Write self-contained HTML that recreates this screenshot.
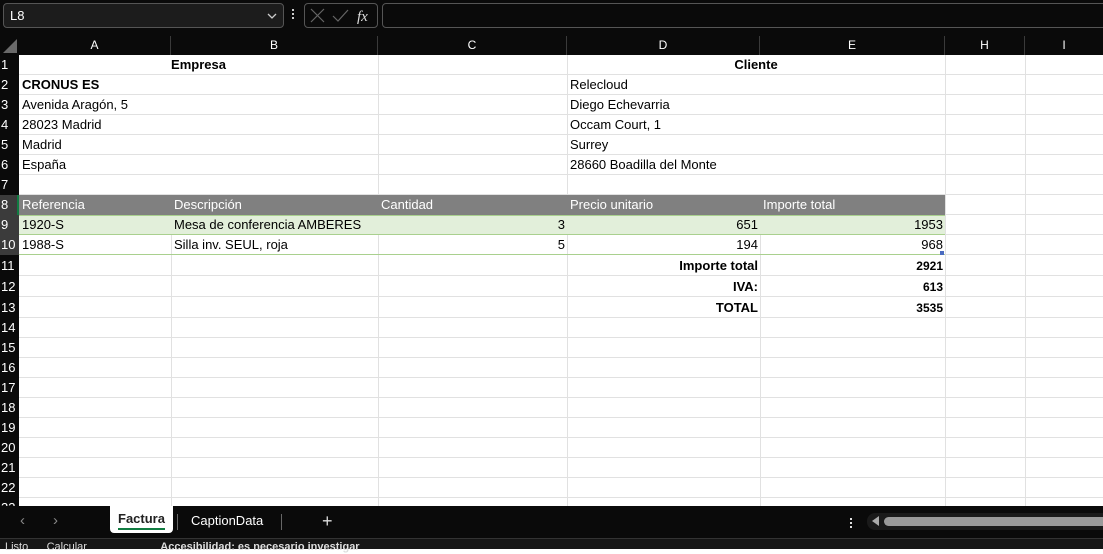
<!DOCTYPE html>
<html><head><meta charset="utf-8"><style>
*{margin:0;padding:0;box-sizing:border-box}
body{width:1103px;height:549px;overflow:hidden;background:#fff;font-family:"Liberation Sans",sans-serif;position:relative}
.a{position:absolute}
.h{position:absolute;left:19px;width:1084px;height:1px;background:#e1e1e1}
.v{position:absolute;top:55px;height:451px;width:1px;background:#e1e1e1}
.t{position:absolute;font-size:13px;color:#000;white-space:nowrap;line-height:20px}
.rn{position:absolute;left:0;width:19px;background:#0a0a0a;color:#fff;font-size:13px;text-align:left;padding-left:1px;line-height:20px}
.ch{position:absolute;top:36px;height:19px;color:#fff;font-size:12px;text-align:center;line-height:19px;border-right:1px solid #3a3a3a}
.r{text-align:right}
.b{font-weight:bold}
</style></head><body>
<div class="a" style="left:0;top:0;width:1103px;height:36px;background:#0a0a0a"></div>
<div class="a" style="left:3px;top:3px;width:281px;height:25px;border:1px solid #555;border-radius:4px;background:#1c1c1c;color:#fff;font-size:13px;line-height:23px;padding-left:6px">L8</div>
<svg class="a" style="left:266px;top:11px" width="12" height="10"><path d="M2 3l4 4 4-4" stroke="#ccc" fill="none" stroke-width="1.3"/></svg>
<div class="a" style="left:292px;top:9px;width:2px;height:2px;background:#ccc;box-shadow:0 4px #ccc,0 8px #ccc"></div>
<div class="a" style="left:304px;top:3px;width:74px;height:25px;border:1px solid #555;border-radius:4px"></div>
<svg class="a" style="left:308px;top:6px" width="70" height="20"><path d="M3 3l13 13M16 3L3 16" stroke="#666" stroke-width="1.2"/><path d="M25 10l5 5 10-11" stroke="#666" fill="none" stroke-width="1.2"/><text x="49" y="15" fill="#ddd" font-family="Liberation Serif" font-style="italic" font-size="15">fx</text></svg>
<div class="a" style="left:382px;top:3px;width:730px;height:25px;border:1px solid #555;border-radius:4px"></div>
<div class="a" style="left:0;top:36px;width:1103px;height:19px;background:#0a0a0a"></div>
<svg class="a" style="left:3px;top:39px" width="14" height="14"><path d="M14 0V14H0Z" fill="#6a6a6a"/></svg>
<div class="ch" style="left:19px;width:152px">A</div>
<div class="ch" style="left:171px;width:207px">B</div>
<div class="ch" style="left:378px;width:189px">C</div>
<div class="ch" style="left:567px;width:193px">D</div>
<div class="ch" style="left:760px;width:185px">E</div>
<div class="ch" style="left:945px;width:80px">H</div>
<div class="ch" style="left:1025px;width:78px;border:0">I</div>
<div class="a" style="left:0;top:55px;width:19px;height:451px;background:#0a0a0a"></div>
<div class="rn" style="top:55px">1</div><div class="rn" style="top:75px">2</div><div class="rn" style="top:95px">3</div><div class="rn" style="top:115px">4</div><div class="rn" style="top:135px">5</div><div class="rn" style="top:155px">6</div><div class="rn" style="top:175px">7</div>
<div class="rn" style="top:195px;background:#3b3b3b;border-right:2px solid #107c41">8</div>
<div class="rn" style="top:215px;background:#3b3b3b">9</div>
<div class="rn" style="top:235px;background:#3b3b3b">10</div>
<div class="rn" style="top:256px">11</div><div class="rn" style="top:277px">12</div><div class="rn" style="top:298px">13</div><div class="rn" style="top:318px">14</div><div class="rn" style="top:338px">15</div><div class="rn" style="top:358px">16</div><div class="rn" style="top:378px">17</div><div class="rn" style="top:398px">18</div><div class="rn" style="top:418px">19</div><div class="rn" style="top:438px">20</div><div class="rn" style="top:458px">21</div><div class="rn" style="top:478px">22</div><div class="rn" style="top:498px">23</div>
<div class="v" style="left:171px;top:195px;height:311px"></div><div class="v" style="left:378px"></div><div class="v" style="left:567px"></div><div class="v" style="left:760px;top:195px;height:311px"></div><div class="v" style="left:945px"></div><div class="v" style="left:1025px"></div>
<div class="h" style="top:74px"></div><div class="h" style="top:94px"></div><div class="h" style="top:114px"></div><div class="h" style="top:134px"></div><div class="h" style="top:154px"></div><div class="h" style="top:174px"></div><div class="h" style="top:194px"></div><div class="h" style="top:214px"></div><div class="h" style="top:234px"></div><div class="h" style="top:254px"></div><div class="h" style="top:275px"></div><div class="h" style="top:296px"></div><div class="h" style="top:317px"></div><div class="h" style="top:337px"></div><div class="h" style="top:357px"></div><div class="h" style="top:377px"></div><div class="h" style="top:397px"></div><div class="h" style="top:417px"></div><div class="h" style="top:437px"></div><div class="h" style="top:457px"></div><div class="h" style="top:477px"></div><div class="h" style="top:497px"></div>
<div class="a" style="left:19px;top:195px;width:926px;height:20px;background:#808080"></div>
<div class="a" style="left:19px;top:215px;width:926px;height:20px;background:#e2efda;border-top:1px solid #a9d08e;border-bottom:1px solid #a9d08e"></div>
<div class="a" style="left:19px;top:254px;width:926px;height:1px;background:#a9d08e"></div>
<div class="a" style="left:940px;top:251px;width:4px;height:4px;background:#4a6bc0"></div>
<div class="t b" style="left:19px;top:55px;width:359px;text-align:center">Empresa</div>
<div class="t b" style="left:567px;top:55px;width:378px;text-align:center">Cliente</div>
<div class="t b" style="left:22px;top:75px">CRONUS ES</div>
<div class="t" style="left:22px;top:95px">Avenida Aragón, 5</div>
<div class="t" style="left:22px;top:115px">28023 Madrid</div>
<div class="t" style="left:22px;top:135px">Madrid</div>
<div class="t" style="left:22px;top:155px">España</div>
<div class="t" style="left:570px;top:75px">Relecloud</div>
<div class="t" style="left:570px;top:95px">Diego Echevarria</div>
<div class="t" style="left:570px;top:115px">Occam Court, 1</div>
<div class="t" style="left:570px;top:135px">Surrey</div>
<div class="t" style="left:570px;top:155px">28660 Boadilla del Monte</div>
<div class="t" style="left:22px;top:195px;color:#fff">Referencia</div>
<div class="t" style="left:174px;top:195px;color:#fff">Descripción</div>
<div class="t" style="left:381px;top:195px;color:#fff">Cantidad</div>
<div class="t" style="left:570px;top:195px;color:#fff">Precio unitario</div>
<div class="t" style="left:763px;top:195px;color:#fff">Importe total</div>
<div class="t" style="left:22px;top:215px">1920-S</div>
<div class="t" style="left:174px;top:215px">Mesa de conferencia AMBERES</div>
<div class="t r" style="left:378px;top:215px;width:187px">3</div>
<div class="t r" style="left:567px;top:215px;width:191px">651</div>
<div class="t r" style="left:760px;top:215px;width:183px">1953</div>
<div class="t" style="left:22px;top:235px">1988-S</div>
<div class="t" style="left:174px;top:235px">Silla inv. SEUL, roja</div>
<div class="t r" style="left:378px;top:235px;width:187px">5</div>
<div class="t r" style="left:567px;top:235px;width:191px">194</div>
<div class="t r" style="left:760px;top:235px;width:183px">968</div>
<div class="t r b" style="left:567px;top:256px;width:191px">Importe total</div>
<div class="t r b" style="left:760px;top:256px;width:183px;font-size:12px">2921</div>
<div class="t r b" style="left:567px;top:277px;width:191px">IVA:</div>
<div class="t r b" style="left:760px;top:277px;width:183px;font-size:12px">613</div>
<div class="t r b" style="left:567px;top:298px;width:191px">TOTAL</div>
<div class="t r b" style="left:760px;top:298px;width:183px;font-size:12px">3535</div>
<div class="a" style="left:0;top:506px;width:1103px;height:32px;background:#0a0a0a"></div>
<div class="a" style="left:20px;top:512px;color:#888;font-size:15px">‹</div>
<div class="a" style="left:53px;top:512px;color:#888;font-size:15px">›</div>
<div class="a" style="left:110px;top:506px;width:63px;height:27px;background:#fff;border-radius:0 0 4px 4px;font-size:13px;font-weight:bold;color:#222;text-align:center;line-height:26px">Factura</div>
<div class="a" style="left:118px;top:528px;width:47px;height:2px;background:#107c41"></div>
<div class="a" style="left:177px;top:514px;width:1px;height:16px;background:#666"></div>
<div class="a" style="left:191px;top:506px;color:#fff;font-size:13px;line-height:30px">CaptionData</div>
<div class="a" style="left:281px;top:514px;width:1px;height:16px;background:#666"></div>
<div class="a" style="left:322px;top:506px;color:#ddd;font-size:18px;line-height:30px">+</div>
<div class="a" style="left:850px;top:518px;width:2px;height:2px;background:#ddd;box-shadow:0 4px #ddd,0 8px #ddd"></div>
<div class="a" style="left:867px;top:513px;width:236px;height:17px;background:#1a1a1a;border-radius:8px 0 0 8px"></div>
<svg class="a" style="left:872px;top:516px" width="8" height="10"><path d="M7 0V10L0 5Z" fill="#aaa"/></svg>
<div class="a" style="left:884px;top:517px;width:219px;height:9px;background:#9a9a9a;border-radius:5px 0 0 5px"></div>
<div class="a" style="left:0;top:538px;width:1103px;height:11px;background:#161616;border-top:1px solid #333"></div>
<div class="a" style="left:5px;top:540px;color:#ddd;font-size:11px;line-height:14px;white-space:nowrap">Listo&nbsp;&nbsp;&nbsp;&nbsp;&nbsp;&nbsp;Calcular&nbsp;&nbsp;&nbsp;&nbsp;&nbsp;&nbsp;&nbsp;&nbsp;&nbsp;&nbsp;&nbsp;&nbsp;&nbsp;&nbsp;&nbsp;&nbsp;&nbsp;&nbsp;&nbsp;&nbsp;&nbsp;&nbsp;&nbsp;&nbsp;<b>Accesibilidad: es necesario investigar</b></div>
</body></html>
